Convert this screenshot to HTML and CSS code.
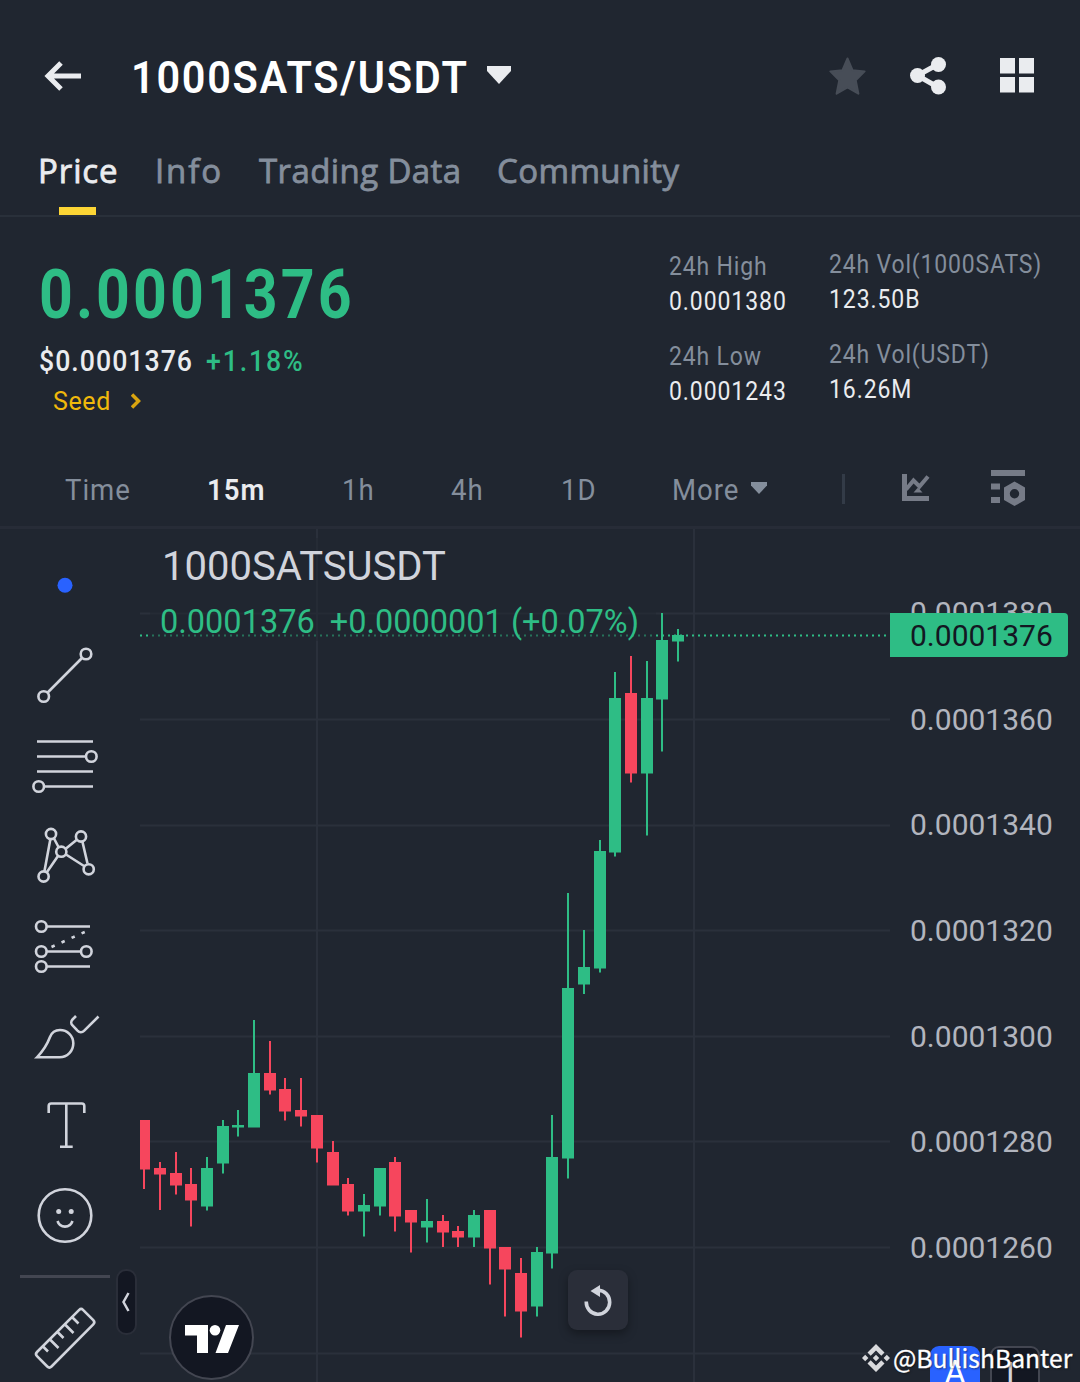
FILE: index.html
```html
<!DOCTYPE html>
<html lang="en">
<head>
    <meta charset="UTF-8">
    <meta name="viewport" content="width=device-width, initial-scale=1.0">
    <title>1000SATS/USDT</title>
    <link rel="stylesheet" href="styles.css">
</head>
<body>
    <!-- Header -->
    <header class="header">
        <svg class="back" width="38" height="30" viewBox="0 0 38 30" fill="none" stroke="#eaecef" stroke-width="5">
            <path d="M37 15H5M17 2L4 15l13 13"/>
        </svg>
        <h1>1000SATS/USDT</h1>
        <svg class="caret" width="24" height="18" viewBox="0 0 24 18" fill="#eaecef"><path d="M0 0h24v5L12 18 0 5z"/></svg>
        <div class="header-icons">
            <svg width="38" height="38" viewBox="0 0 38 38" fill="#474d57" stroke="#474d57" stroke-width="2" stroke-linejoin="round">
                <path d="M19.500 1.500l5 11.700 12.100 1.200-8.900 8.800 2.700 13.500-10.900-6.300-10.900 6.300 2.700-13.500-8.900-8.800 12.100-1.200z"/>
            </svg>
            <svg width="38" height="38" viewBox="0 0 38 38" fill="#eaecef">
                <path d="M8.500 18.500L29.500 7M8.500 18.500l21 12" stroke="#eaecef" stroke-width="5"/>
                <circle cx="8.500" cy="18.500" r="7.500"/><circle cx="29.500" cy="7.500" r="7.500"/><circle cx="29.500" cy="30" r="7.500"/>
            </svg>
            <svg width="34" height="35" viewBox="0 0 34 35" fill="#eaecef">
                <path d="M0 0h15v15.500H0zM19 0h15v15.500H19zM0 19h15v15.500H0zM19 19h15v15.500H19z"/>
            </svg>
        </div>
    </header>

    <nav class="tabs">
        <a class="tab active">Price</a>
        <a class="tab info">Info</a>
        <a class="tab trading">Trading Data</a>
        <a class="tab community">Community</a>
    </nav>

    <!-- Ticker -->
    <section class="ticker">
        <div class="price-block">
            <div class="last-price">0.0001376</div>
            <div class="sub-price"><span class="usd">$0.0001376</span><span class="change">+1.18%</span></div>
            <div class="seed">Seed
                <svg width="10" height="16" viewBox="0 0 10 16" fill="none" stroke="#d9a40f" stroke-width="3.500"><path d="M1 1.500L7.500 8 1 14.500"/></svg>
            </div>
        </div>
        <div class="stats">
            <div class="stat"><span class="label">24h High</span><span class="value">0.0001380</span></div>
            <div class="stat"><span class="label">24h Low</span><span class="value">0.0001243</span></div>
        </div>
        <div class="stats volume">
            <div class="stat"><span class="label">24h Vol(1000SATS)</span><span class="value">123.50B</span></div>
            <div class="stat"><span class="label">24h Vol(USDT)</span><span class="value">16.26M</span></div>
        </div>
    </section>

    <!-- Intervals -->
    <div class="intervals">
        <span class="time">Time</span>
        <span class="m15 selected">15m</span>
        <span class="h1">1h</span>
        <span class="h4">4h</span>
        <span class="d1">1D</span>
        <span class="more">More</span>
        <svg class="more-caret" width="16" height="12" viewBox="0 0 16 12" fill="#848e9c"><path d="M0 0h16v3.500L8 12 0 3.500z"/></svg>
        <i class="divider"></i>
        <svg class="style-icon" width="28" height="28" viewBox="0 0 28 28" fill="none" stroke="#767b87">
            <path d="M2.500 0v24.500H27" stroke-width="5"/>
            <path d="M4 15.500l7.500-9 6 6L26 2.500" stroke-width="4"/>
            <path d="M16 13.500l4.500 5h-9z" fill="#767b87" stroke="none"/>
        </svg>
        <svg class="settings-icon" width="34" height="36" viewBox="0 0 34 36" fill="#767b87">
            <path d="M0 0h34v6H0zM0 13.500h9v6H0zM0 27h9v6H0z"/>
            <path fill-rule="evenodd" d="M23.500 11.500L34 17.500v12.500l-10.500 6-10.500-6V17.500zM23.500 19a4.700 4.700 0 1 0 0 9.400 4.700 4.700 0 0 0 0-9.400z"/>
        </svg>
    </div>

    <!-- Chart -->
    <main class="chart">
        <aside class="tools">
            <svg viewBox="0 0 90 90"><circle class="dot" cx="45" cy="45.300" r="7.500"/></svg>
            <svg viewBox="0 0 90 90"><path d="M27.700 62.500L62 28"/><circle cx="66" cy="24" r="5.300"/><circle cx="23.700" cy="66.500" r="5.300"/></svg>
            <svg viewBox="0 0 90 90"><path d="M17 21.500h56M17 36.500h49M17 51.500h56M24 66.500h49"/><circle cx="71.300" cy="36.500" r="5.300"/><circle cx="18.700" cy="66.500" r="5.300"/></svg>
            <svg viewBox="0 0 90 90"><path d="M30.300 29.500L24.500 61M34 28.500l4.500 8.500M46 38.500l10.500-8.500M62.500 32l5 21.500M46 44.500l18 11.500M38 46L27 62"/><circle cx="31" cy="24" r="5.100"/><circle cx="61" cy="26.500" r="5.100"/><circle cx="41.300" cy="41.700" r="5.100"/><circle cx="23.600" cy="66.500" r="5.100"/><circle cx="68.700" cy="59.300" r="5.100"/></svg>
            <svg viewBox="0 0 90 90"><path d="M27 26.500h43M27 51.500h34M27 66.500h43"/><path d="M31.500 47L68 30.500" stroke-dasharray="3.500 7.500"/><circle cx="21.300" cy="26.500" r="5.300"/><circle cx="21.300" cy="51.500" r="5.300"/><circle cx="66.300" cy="51.500" r="5.300"/><circle cx="21.300" cy="66.500" r="5.300"/></svg>
            <svg viewBox="0 0 90 90"><path d="M17 67.300h22.500c8 0 13.800-6.300 13.800-14 0-7.500-6-13.300-13.300-13.300-5 0-8.500 3-10 7-3 8-6 13-13 20.300zM56 26l-3.500 3.500c-1.500 1.500-1.700 4-.2 5.600l5.200 5.500c2 2 4.700 2 6.500.2L78.500 26.500"/></svg>
            <svg viewBox="0 0 90 90"><path d="M28.700 33v-7a2.500 2.500 0 0 1 2.500-2.500h30.600a2.500 2.500 0 0 1 2.500 2.500v7M46.300 24v42.500M40 66.800h12.700"/></svg>
            <svg viewBox="0 0 90 90"><circle cx="45" cy="45.500" r="26.300"/><circle class="eye" cx="38.700" cy="41.500" r="2.500"/><circle class="eye" cx="51.200" cy="41.500" r="2.500"/><path d="M37.500 51c2.500 7.500 12.500 7.500 15 0"/></svg>
            <hr>
            <svg viewBox="0 0 90 90"><path d="M59.200 16.800L17 59a3 3 0 0 0 0 4.200l10.300 10.300a3 3 0 0 0 4.200 0L73.300 31.300a3 3 0 0 0 0-4.200L63 16.800a2.700 2.700 0 0 0-3.800 0zM23 53.500l5 5M30 46.500l8.500 8.500M37.500 39l6 6M45 31.500l8.500 8.500M52.500 24.500l6 6" /></svg>
            <button class="collapse"><svg width="8" height="20" viewBox="0 0 8 20"><path d="M6.500 1L1.500 10l5 9"/></svg></button>
        </aside>

        <div class="plot">
            <!-- viewBox origin keeps the drawing in page coordinates -->
            <svg class="candles" width="750" height="853" viewBox="140 529 750 853">
                <path class="grid" d="M140 613.500h750M140 719.500h750M140 825.500h750M140 930.500h750M140 1036.500h750M140 1141.500h750M140 1247.500h750M140 1353.500h750M317 529v853M694 529v853"/>
                <path class="current" d="M140 635.500h746"/>
                <path class="wick down" d="M144 1120v69M160 1162v48M176 1152v42.500M191 1168v58.500M270 1041v53.500M285 1078v42.500M301 1078v48.500M317 1115v47.500M333 1141v44M348 1178v37.500M395 1157v74.500M411 1210v42.500M443 1215v32M458 1226v21M490 1210v74.500M505 1247v69.500M521 1258v79.500M631 656v126.500"/>
                <path class="wick up" d="M207 1157v53.500M223 1120v53.500M238 1110v26.500M254 1020v107M364 1194v42.500M380 1168v47.500M427 1199v43.500M474 1210v37M537 1247v69.500M552 1115v153.500M568 893v285.500M584 930v64M600 840v132.500M615 672v184.500M647 661v174.500M662 613v138.500M678 629v32.500"/>
                <path class="body down" d="M140 1120h10v49.500h-10zM154 1168h12v6.500h-12zM170 1173h12v12.500h-12zM185 1184h12v16.500h-12zM264 1073h12v17.500h-12zM279 1089h12v22.500h-12zM295 1110h12v6.500h-12zM311 1115h12v33.500h-12zM327 1152h12v33.500h-12zM342 1184h12v27.500h-12zM389 1162h12v54.500h-12zM405 1210h12v12.500h-12zM437 1221h12v11.500h-12zM452 1231h12v6.500h-12zM484 1210h12v38.500h-12zM499 1247h12v22.500h-12zM515 1273h12v38.500h-12zM625 693h12v80.500h-12z"/>
                <path class="body up" d="M201 1168h12v38.500h-12zM217 1126h12v37.500h-12zM232 1125h12v2.500h-12zM248 1073h12v54.500h-12zM358 1205h12v6.500h-12zM374 1168h12v38.500h-12zM421 1221h12v6.500h-12zM468 1215h12v22.500h-12zM531 1252h12v54.500h-12zM546 1157h12v96.500h-12zM562 988h12v170.500h-12zM578 967h12v17.500h-12zM594 851h12v117.500h-12zM609 698h12v154.500h-12zM641 698h12v75.500h-12zM656 640h12v59.500h-12zM672 635h12v6.500h-12z"/>
            </svg>
            <div class="legend">
                <div class="symbol">1000SATSUSDT</div>
                <div class="quote"><span>0.0001376</span><span>+0.0000001 (+0.07%)</span></div>
            </div>
            <div class="tv-logo">
                <svg width="54" height="28" viewBox="0 0 54 28" fill="#fff"><path d="M0 0h23v28H12V10.500H0zM41 0h13L43 28H30.500z"/><circle cx="30" cy="5.300" r="5.300"/></svg>
            </div>
            <button class="reset">
                <svg width="28" height="32" viewBox="0 0 28 32" fill="none" stroke="#d1d4dc" stroke-width="3.600"><path d="M2.300 17.500a11.700 12 0 1 0 11.700-11.300h-1"/><path d="M16 1v12L6.500 7z" fill="#d1d4dc" stroke="none"/></svg>
            </button>
        </div>

        <aside class="axis">
            <span>0.0001380</span>
            <span>0.0001360</span>
            <span>0.0001340</span>
            <span>0.0001320</span>
            <span>0.0001300</span>
            <span>0.0001280</span>
            <span>0.0001260</span>
            <div class="price-tag">0.0001376</div>
        </aside>

        <div class="scale-buttons">
            <button class="auto">A</button>
            <button class="log">L</button>
        </div>
        <div class="watermark">
            <svg width="28" height="28" viewBox="0 0 28 28" fill="#d9dadd">
                <path d="M14 0l8.500 8.500-3.200 3.200L14 6.400l-5.300 5.300-3.200-3.200zM14 28l8.500-8.500-3.200-3.200-5.300 5.300-5.300-5.300-3.200 3.200zM14 10.800l3.200 3.200-3.200 3.200-3.200-3.200zM3.200 10.800L6.400 14l-3.200 3.200L0 14zM24.800 10.800L28 14l-3.200 3.200-3.200-3.200z"/>
            </svg>
            <span>@BullishBanter</span>
        </div>
    </main>
</body>
</html>
```

FILE: styles.css
```css
* {
    box-sizing: border-box;
}

body {
    margin: 0;
    width: 1080px;
    height: 1382px;
    overflow: hidden;
    background-color: #202630;
    color: #eaecef;
    font-family: Roboto, 'Liberation Sans', sans-serif;
}

svg {
    display: block;
    flex: none;
}

button {
    padding: 0;
    border: none;
    font-family: inherit;
}

.header h1,
.last-price,
.sub-price span,
.stat span,
.intervals span {
    transform: scaleX(0.92);
    transform-origin: left;
}

/* Header */
.header {
    display: flex;
    align-items: center;
    height: 152px;
    padding: 0 46px 0 44px;
}

.header h1 {
    width: 336px;
    margin: 3px 20px 0 49px;
    font-size: 45px;
    font-weight: 600;
    line-height: 60px;
    letter-spacing: 1.9px;
    white-space: nowrap;
    color: #fff;
}

.header-icons {
    display: flex;
    align-items: center;
    gap: 43px;
    margin: -1px 0 0 auto;
}

.header-icons svg:last-child {
    margin-left: 10px;
}

.header .caret {
    margin: -2px 0 0 0;
}

/* Tabs */
.tabs {
    display: flex;
    height: 65px;
    padding-left: 38px;
    border-bottom: 2px solid #29303a;
    font-family: 'Open Sans', sans-serif;
    font-size: 33px;
    line-height: 38px;
    letter-spacing: 0.4px;
    white-space: nowrap;
    color: #848e9c;
    -webkit-text-stroke: 0.8px;
}

.tab {
    position: relative;
    width: 117px;
    height: 63px;
}

.tab.active {
    letter-spacing: 0.9px;
}

.tab.info {
    width: 104px;
    letter-spacing: 1.9px;
}

.tab.trading {
    width: 238px;
}

.active {
    color: #eaecef;
}

.tab.active::after {
    content: '';
    position: absolute;
    left: 21px;
    bottom: 0;
    width: 37px;
    height: 8px;
    background-color: #fcd535;
}

/* Ticker */
.ticker {
    display: flex;
    height: 237px;
    white-space: nowrap;
}

.price-block {
    width: 669px;
    padding: 36px 0 0 39px;
}

.last-price {
    height: 84px;
    font-size: 69px;
    font-weight: 700;
    line-height: 84px;
    letter-spacing: 3.6px;
    color: #2ebd85;
    transform: scaleX(0.855);
}

.sub-price {
    display: flex;
    height: 44px;
    margin-top: 3px;
    font-size: 29px;
    line-height: 43px;
}

.usd {
    width: 167px;
    font-weight: 500;
    letter-spacing: 1.1px;
}

.change {
    font-weight: 500;
    letter-spacing: 2px;
    color: #2ebd85;
}

.seed {
    display: flex;
    align-items: center;
    gap: 20px;
    height: 34px;
    padding-left: 14px;
    font-size: 25px;
    letter-spacing: 0.6px;
    color: #f0b90b;
}

.seed svg {
    margin-top: -1px;
}

.stats {
    width: 160px;
    padding-top: 32px;
}

.volume {
    width: 240px;
    padding-top: 30px;
}

.stat {
    height: 90px;
    font-size: 25px;
    line-height: 35px;
    letter-spacing: 1px;
}

.stat span {
    display: block;
}

.label {
    letter-spacing: 0.9px;
    color: #848e9c;
}

/* Intervals */
.intervals {
    display: flex;
    align-items: center;
    height: 72px;
    padding: 0 0 3px 65px;
    font-size: 30px;
    letter-spacing: 1px;
    white-space: nowrap;
    color: #848e9c;
}

.intervals span {
    padding-top: 2px;
}

.intervals svg {
    margin-top: -2px;
}

.time {
    width: 142px;
}

.m15 {
    width: 135px;
}

.selected {
    font-weight: 600;
    color: #eaecef;
}

.h1 {
    width: 109px;
}

.h4 {
    width: 110px;
}

.d1 {
    width: 111px;
}

.more {
    width: 79px;
}

.divider {
    width: 3px;
    height: 30px;
    margin: 0 57px 0 75px;
    background-color: #333b47;
}

.settings-icon {
    margin-left: 61px;
}

/* Chart */
.chart {
    position: relative;
    display: flex;
    height: 856px;
    border-top: 3px solid #272c37;
}

.tools {
    position: relative;
    width: 140px;
    padding: 11px 0 0 20px;
}

.tools > svg {
    width: 90px;
    height: 90px;
    fill: none;
    stroke: #d1d4dc;
    stroke-width: 2.6px;
}

.tools .dot {
    fill: #2962ff;
    stroke: none;
}

.tools .eye {
    fill: #d1d4dc;
    stroke: none;
}

.tools hr {
    width: 90px;
    height: 3px;
    margin: 15px 0;
    border: none;
    background-color: #434651;
}

.collapse {
    position: absolute;
    left: 116px;
    top: 740px;
    display: flex;
    align-items: center;
    justify-content: center;
    width: 21px;
    height: 66px;
    padding-right: 2px;
    border: 2px solid #2a2e39;
    border-radius: 10px;
    background-color: #131722;
}

.collapse svg {
    fill: none;
    stroke: #d1d4dc;
    stroke-width: 2.5px;
}

.plot {
    position: relative;
    width: 750px;
}

.grid {
    stroke: #2a303b;
    stroke-width: 2px;
}

.current {
    stroke: #2ebd85;
    stroke-width: 2px;
    stroke-dasharray: 2 4;
}

.wick {
    fill: none;
    stroke-width: 2px;
}

.wick.up {
    stroke: #2ebd85;
}

.wick.down {
    stroke: #f6465d;
}

.body.up {
    fill: #2ebd85;
}

.body.down {
    fill: #f6465d;
}

.legend {
    position: absolute;
    left: 10px;
    top: 9px;
    width: 506px;
    height: 103px;
    padding-left: 11px;
    background-color: rgba(32, 38, 48, 0.5);
    white-space: nowrap;
}

.symbol {
    padding-left: 1px;
    font-size: 40px;
    line-height: 58px;
    color: #d1d4dc;
}

.quote {
    display: flex;
    gap: 15px;
    margin-left: -1px;
    font-size: 32.5px;
    line-height: 52px;
    color: #2ebd85;
}

.tv-logo {
    position: absolute;
    left: 29px;
    top: 766px;
    display: flex;
    align-items: center;
    justify-content: center;
    width: 85px;
    height: 85px;
    padding-top: 2px;
    border: 2px solid #434651;
    border-radius: 50%;
    background-color: #131722;
}

.reset {
    position: absolute;
    left: 428px;
    top: 741px;
    display: flex;
    align-items: center;
    justify-content: center;
    width: 60px;
    height: 60px;
    border-radius: 9px;
    background-color: #2a2e39;
    box-shadow: 0 4px 10px rgba(0, 0, 0, 0.35);
}

.axis {
    position: relative;
    display: flex;
    flex-direction: column;
    width: 190px;
    padding: 32px 0 0 20px;
    font-size: 30px;
    color: #b2b5be;
}

.axis span {
    height: 105.7px;
    line-height: 106px;
}

.axis span:first-child {
    line-height: 104px;
}

.price-tag {
    position: absolute;
    left: 0;
    top: 84px;
    width: 178px;
    height: 44px;
    padding-left: 20px;
    border-radius: 0 4px 4px 0;
    background-color: #2ebd85;
    line-height: 46px;
    color: #131722;
}

.scale-buttons {
    position: absolute;
    left: 930px;
    top: 817px;
    display: flex;
    gap: 10px;
}

.scale-buttons button {
    width: 50px;
    height: 50px;
    border-radius: 9px;
    font-size: 33px;
    line-height: 54px;
    color: #fff;
}

.auto {
    background-color: #2962ff;
}

.scale-buttons .log {
    border: 2px solid #434651;
    background-color: #131722;
    color: #d1d4dc;
}

.watermark {
    position: absolute;
    left: 862px;
    top: 811px;
    display: flex;
    align-items: center;
    gap: 3px;
    height: 36px;
    font-family: 'Noto Sans CJK SC', sans-serif;
    font-size: 24.7px;
    line-height: 34px;
    color: #fff;
    white-space: nowrap;
    text-shadow: 1px 1px 2px rgba(0, 0, 0, 0.5);
    -webkit-text-stroke: 0.3px;
}

.watermark span {
    margin-top: -2px;
}
```
